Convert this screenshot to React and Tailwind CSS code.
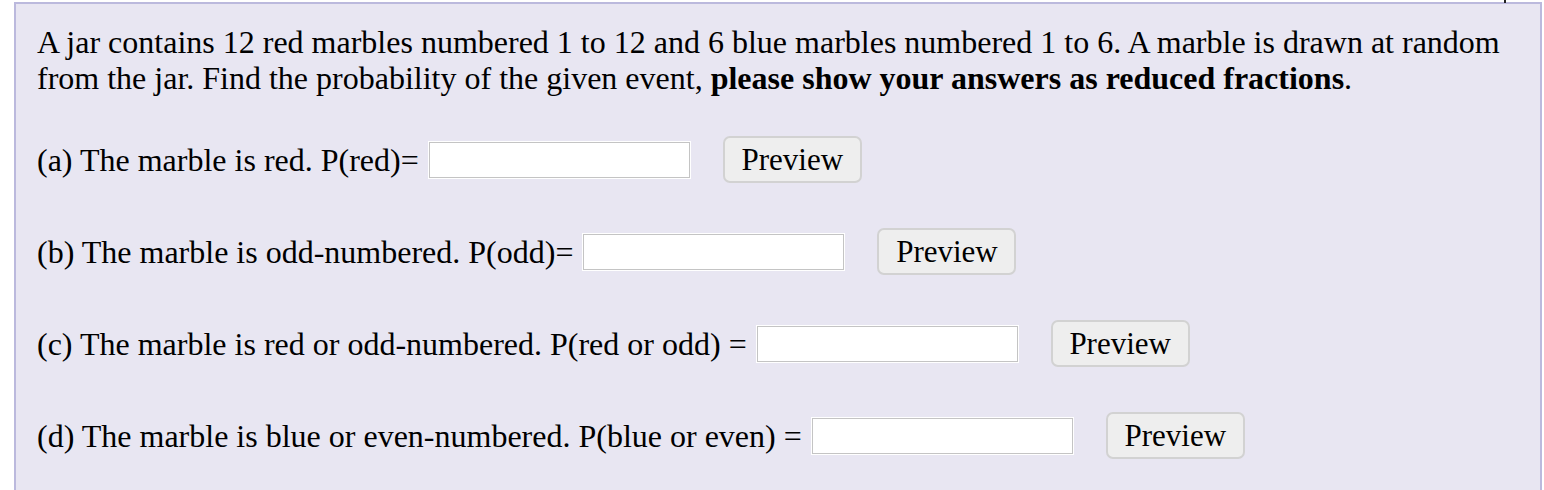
import React from "react";

const rows = [
  "(a) The marble is red. P(red)=",
  "(b) The marble is odd-numbered. P(odd)=",
  "(c) The marble is red or odd-numbered. P(red or odd) =",
  "(d) The marble is blue or even-numbered. P(blue or even) =",
];

export default function App() {
  return (
    <div className="w-[1544px] h-[490px] bg-white overflow-hidden relative" style={{ fontFamily: '"Liberation Serif", "Times New Roman", serif' }}>
      <div className="absolute left-[1504px] top-0 w-[2px] h-[3px] bg-[#222]" />
      <div className="ml-[14px] mt-[2px] w-[1528px] h-[520px] bg-[#e8e6f2] border-2 border-[#bbb9dd] pl-[21px] pr-[20px] pt-[20px] text-[32px] leading-[36px] text-black">
        <p>
          A jar contains 12 red marbles numbered 1 to 12 and 6 blue marbles numbered 1 to 6. A marble is drawn at random from the jar. Find the probability of the given event, <b>please show your answers as reduced fractions</b>.
        </p>
        <div className="mt-[40px] flex flex-col gap-[45px]">
          {rows.map((t) => (
            <div key={t} className="flex items-center h-[47px]">
              <span>{t}</span>
              <div className="ml-[10px] w-[261px] h-[36px] bg-white border border-[#c4c4c4] outline outline-1 outline-white" />
              <button className="ml-[33px] w-[139px] h-[47px] rounded-[7px] bg-[#eeeeee] border-2 border-[#d2d2d2] text-[31px] leading-none text-black" style={{ fontFamily: '"Liberation Serif", "Times New Roman", serif' }}>
                Preview
              </button>
            </div>
          ))}
        </div>
      </div>
    </div>
  );
}
